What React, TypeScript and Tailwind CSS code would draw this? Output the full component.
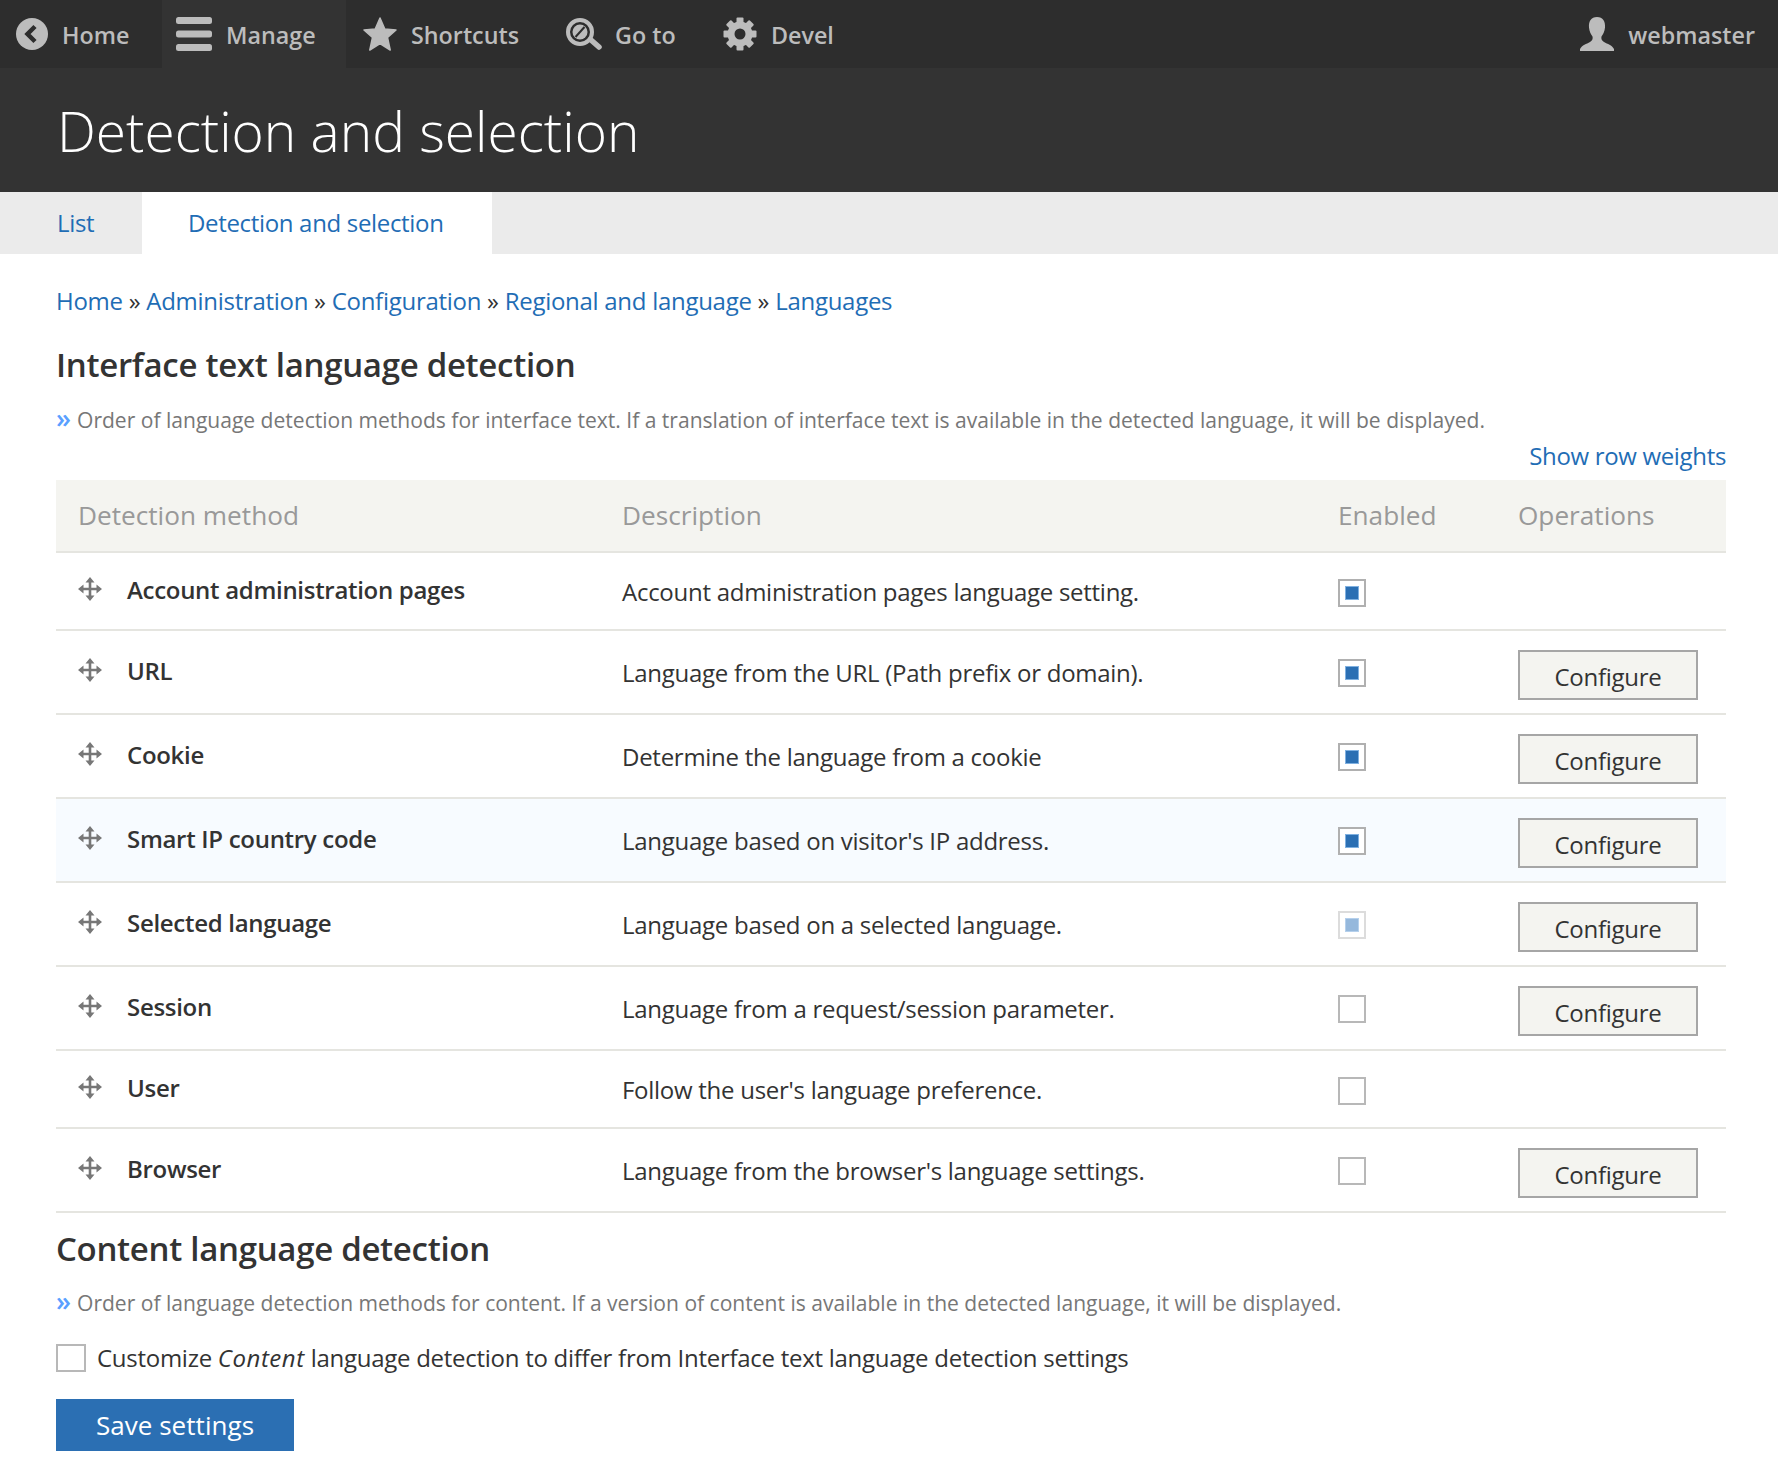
import type { ReactNode } from "react";

const iconColor = "#bcbcbc";

function BackIcon() {
  return (
    <svg width="32" height="32" viewBox="0 0 32 32" className="shrink-0">
      <circle cx="16" cy="16" r="16" fill={iconColor} />
      <path d="M19 8.5 L11.5 16 L19 23.5" fill="none" stroke="#2d2d2d" strokeWidth="4.5" />
    </svg>
  );
}

function BarsIcon() {
  return (
    <svg width="36" height="34" viewBox="0 0 36 34" className="shrink-0">
      <rect x="0" y="0" width="36" height="7" rx="2.5" fill={iconColor} />
      <rect x="0" y="13.5" width="36" height="7" rx="2.5" fill={iconColor} />
      <rect x="0" y="27" width="36" height="7" rx="2.5" fill={iconColor} />
    </svg>
  );
}

function StarIcon() {
  return (
    <svg width="34" height="34" viewBox="0 0 34 34" className="shrink-0">
      <path
        d="M17 1 L21.8 12 L33 13 L24.5 20.5 L27.2 33 L17 26.5 L6.8 33 L9.5 20.5 L1 13 L12.2 12 Z"
        fill={iconColor}
        stroke={iconColor}
        strokeWidth="1.5"
        strokeLinejoin="round"
      />
    </svg>
  );
}

function GotoIcon() {
  return (
    <svg width="36" height="32" viewBox="0 0 36 32" className="shrink-0">
      <circle cx="14" cy="14" r="12" fill="none" stroke={iconColor} strokeWidth="4" />
      <circle cx="14" cy="14" r="7.5" fill={iconColor} />
      <path d="M9.5 19 L18.5 9" stroke="#2d2d2d" strokeWidth="2" />
      <path d="M25 22 L33 29" stroke={iconColor} strokeWidth="5.5" strokeLinecap="round" />
    </svg>
  );
}

function GearIcon() {
  const angles = [0, 45, 90, 135, 180, 225, 270, 315];
  return (
    <svg width="34" height="34" viewBox="0 0 34 34" className="shrink-0">
      {angles.map((a) => (
        <rect key={a} x="13.5" y="0.5" width="7" height="9" rx="1" fill={iconColor} transform={`rotate(${a} 17 17)`} />
      ))}
      <circle cx="17" cy="17" r="9" fill="none" stroke={iconColor} strokeWidth="7" />
    </svg>
  );
}

function UserIcon() {
  return (
    <svg width="34" height="34" viewBox="0 0 34 34" className="shrink-0">
      <path
        d="M17 0 C23 0 25.5 4.5 25 10.5 C24.7 14.5 23 17.5 21.5 19.5 C21 21.5 21.5 23.5 24 25 C27.5 27 32 28 34 32 L34 34 L0 34 L0 32 C2 28 6.5 27 10 25 C12.5 23.5 13 21.5 12.5 19.5 C11 17.5 9.3 14.5 9 10.5 C8.5 4.5 11 0 17 0 Z"
        fill={iconColor}
      />
    </svg>
  );
}

function MoveIcon() {
  return (
    <svg width="24" height="24" viewBox="0 0 24 24" className="shrink-0">
      <path d="M12 3 V21 M3 12 H21" stroke="#777777" strokeWidth="2.6" />
      <path d="M12 0 L16.5 5.5 H7.5 Z M12 24 L16.5 18.5 H7.5 Z M0 12 L5.5 7.5 V16.5 Z M24 12 L18.5 7.5 V16.5 Z" fill="#777777" />
    </svg>
  );
}

function CheckBox({ state }: { state: "on" | "faded" | "off" }) {
  if (state === "off") {
    return <span className="block w-[28px] h-[28px] border-[2px] border-[#b8b8b8] bg-white" />;
  }
  if (state === "faded") {
    return (
      <span className="flex items-center justify-center w-[28px] h-[28px] border-[2px] border-[#dcdcdc] bg-white">
        <span className="block w-[14px] h-[14px] bg-[#95b8dc] border border-[#b5d0ec]" />
      </span>
    );
  }
  return (
    <span className="flex items-center justify-center w-[28px] h-[28px] border-[2px] border-[#b0b0b0] bg-white">
      <span className="block w-[14px] h-[14px] bg-[#2b6fb3] border border-[#7fb0e0]" />
    </span>
  );
}

function ToolbarItem({ icon, label, className }: { icon: ReactNode; label: string; className: string }) {
  return (
    <a className={`flex items-center h-full ${className}`}>
      {icon}
      <span className="pt-[3px] text-[23.3px] font-semibold text-[#bcbcbc] leading-none">{label}</span>
    </a>
  );
}

const rows = [
  { name: "Account administration pages", desc: "Account administration pages language setting.", check: "on", configure: false, h: "h-[78px]" },
  { name: "URL", desc: "Language from the URL (Path prefix or domain).", check: "on", configure: true, h: "h-[84px]" },
  { name: "Cookie", desc: "Determine the language from a cookie", check: "on", configure: true, h: "h-[84px]" },
  { name: "Smart IP country code", desc: "Language based on visitor's IP address.", check: "on", configure: true, h: "h-[84px]", bg: "bg-[#f7fbff]" },
  { name: "Selected language", desc: "Language based on a selected language.", check: "faded", configure: true, h: "h-[84px]" },
  { name: "Session", desc: "Language from a request/session parameter.", check: "off", configure: true, h: "h-[84px]" },
  { name: "User", desc: "Follow the user's language preference.", check: "off", configure: false, h: "h-[78px]" },
  { name: "Browser", desc: "Language from the browser's language settings.", check: "off", configure: true, h: "h-[84px]" },
] as const;

const crumbs = ["Home", "Administration", "Configuration", "Regional and language", "Languages"];

export default function App() {
  return (
    <div className="min-h-[1462px] bg-white text-[#333333] font-['Open_Sans',sans-serif]">
      {/* Toolbar */}
      <nav className="flex justify-between h-[68px] bg-[#2d2d2d]">
        <div className="flex h-full">
          <ToolbarItem icon={<BackIcon />} label="Home" className="w-[162px] pl-[16px] gap-[14px]" />
          <ToolbarItem icon={<BarsIcon />} label="Manage" className="w-[184px] pl-[14px] gap-[14px] bg-[#333333]" />
          <ToolbarItem icon={<StarIcon />} label="Shortcuts" className="w-[205px] pl-[17px] gap-[14px]" />
          <ToolbarItem icon={<GotoIcon />} label="Go to" className="w-[157px] pl-[15px] gap-[13px]" />
          <ToolbarItem icon={<GearIcon />} label="Devel" className="pl-[15px] gap-[14px]" />
        </div>
        <ToolbarItem icon={<UserIcon />} label="webmaster" className="pr-[23px] gap-[14px]" />
      </nav>

      {/* Title */}
      <header className="h-[124px] bg-[#333333] pl-[57px] flex items-center">
        <h1 className="text-[55px] font-light text-white leading-none">Detection and selection</h1>
      </header>

      {/* Tabs */}
      <div className="flex h-[62px] bg-[#ebebeb] text-[24px] tracking-[-0.33px] text-[#1f6db5]">
        <a className="flex items-center w-[142px] pl-[57px]">List</a>
        <a className="flex items-center w-[350px] pl-[46px] bg-white">Detection and selection</a>
      </div>

      <main className="pl-[56px] w-[1726px]">
        <div className="pt-[32px] h-[90px] text-[24px] tracking-[-0.28px] leading-[30px] text-[#1f6db5]">
          {crumbs.map((c, i) => (
            <span key={c}>
              {i > 0 && <span className="text-[#333333]"> » </span>}
              <a>{c}</a>
            </span>
          ))}
        </div>

        <h2 className="h-[53px] text-[33px] tracking-[-0.3px] font-semibold leading-[42px]">Interface text language detection</h2>
        <p className="h-[44px] text-[21.05px] leading-[30px] pt-[6px] text-[#777777]">
          <span className="text-[#5a9fff] text-[27px] font-semibold mr-[6px]">»</span>Order of language detection methods for interface text. If a translation of interface text is available in the detected language, it will be displayed.
        </p>
        <div className="h-[39px] text-right text-[24px] tracking-[-0.33px] leading-[30px] text-[#1f6db5]">
          <a>Show row weights</a>
        </div>

        <table className="w-full table-fixed border-collapse">
          <colgroup>
            <col className="w-[566px]" />
            <col className="w-[716px]" />
            <col className="w-[180px]" />
            <col />
          </colgroup>
          <thead>
            <tr className="h-[72px] bg-[#f4f4f0] border-b-[2px] border-[#e5e5e0] text-[26.2px] font-normal text-[#999999] text-left">
              <th className="pl-[22px] font-normal">Detection method</th>
              <th className="font-normal">Description</th>
              <th className="font-normal">Enabled</th>
              <th className="font-normal">Operations</th>
            </tr>
          </thead>
          <tbody>
            {rows.map((row) => (
              <tr key={row.name} className={`border-b-[2px] border-[#e5e5e0] ${row.h} ${"bg" in row ? row.bg : ""}`}>
                <td className="pl-[22px]">
                  <div className="flex items-center gap-[25px] pb-[5px]">
                    <MoveIcon />
                    <span className="pt-[2px] text-[24px] tracking-[-0.3px] font-semibold leading-[32px]">{row.name}</span>
                  </div>
                </td>
                <td className="pt-[1px] text-[24px] tracking-[-0.27px] leading-[32px]">{row.desc}</td>
                <td className={row.configure ? "pt-[2px]" : "pt-[4px]"}>
                  <CheckBox state={row.check} />
                </td>
                <td className="pt-[5px]">
                  {row.configure && (
                    <button className="block w-[180px] h-[50px] border-[2px] border-[#a6a6a6] bg-[#f4f4f0] text-[24px] tracking-[-0.25px] text-[#333333] pt-[4px]">
                      Configure
                    </button>
                  )}
                </td>
              </tr>
            ))}
          </tbody>
        </table>

        <h2 className="h-[58px] pt-[14px] text-[33px] tracking-[-0.3px] font-semibold leading-[44px]">Content language detection</h2>
        <p className="h-[52px] pt-[15px] text-[21.05px] leading-[30px] text-[#777777]">
          <span className="text-[#5a9fff] text-[27px] font-semibold mr-[6px]">»</span>Order of language detection methods for content. If a version of content is available in the detected language, it will be displayed.
        </p>
        <label className="flex items-center gap-[11px] mt-[15px] h-[40px] text-[24px] tracking-[-0.27px]">
          <span className="block w-[30px] h-[28px] border-[2px] border-[#b8b8b8] bg-white" />
          <span>
            Customize <em className="tracking-[0.55px]">Content</em> language detection to differ from Interface text language detection settings
          </span>
        </label>
        <button className="block mt-[21px] w-[238px] h-[52px] bg-[#2b6fb3] text-white text-[26px] tracking-[0.05px]">Save settings</button>
      </main>
    </div>
  );
}
